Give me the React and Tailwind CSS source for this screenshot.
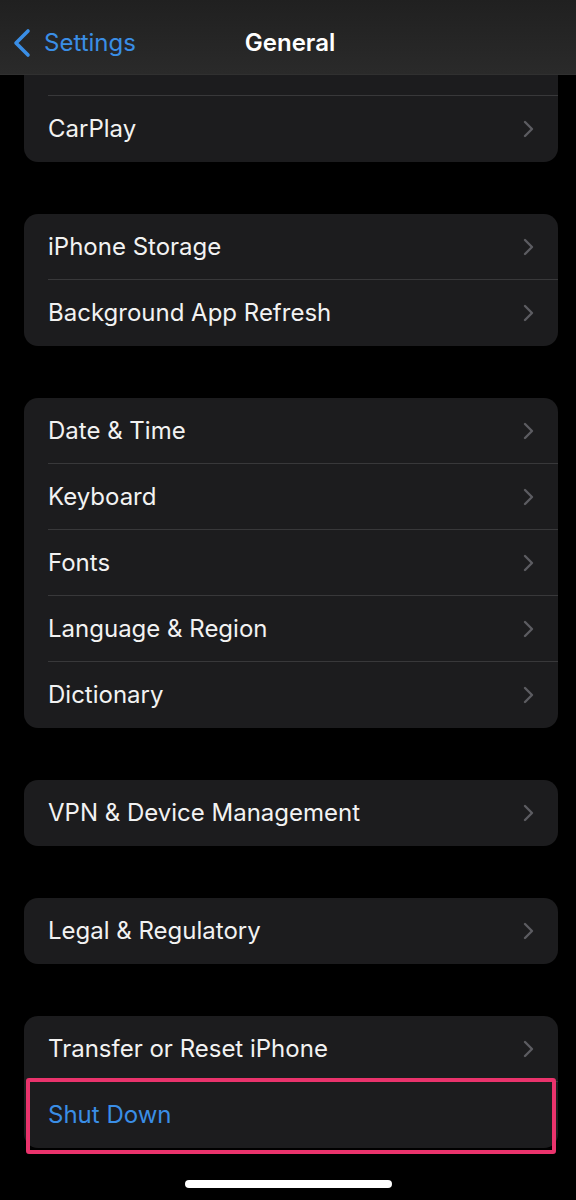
const groups = [
  ["iPhone Storage", "Background App Refresh"],
  ["Date & Time", "Keyboard", "Fonts", "Language & Region", "Dictionary"],
  ["VPN & Device Management"],
  ["Legal & Regulatory"],
];

function Chevron() {
  return (
    <svg width="12" height="20" viewBox="0 0 12 20" fill="none" className="shrink-0">
      <path d="M3 3l7 7-7 7" stroke="#5c5c61" strokeWidth="2.4" strokeLinecap="round" strokeLinejoin="round" />
    </svg>
  );
}

function Row({ label, last }) {
  return (
    <div className="flex h-[66px] items-center pl-6">
      <div className={`flex h-full flex-1 items-center justify-between pr-6 ${last ? "" : "border-b border-[#38383a]"}`}>
        <span className="text-[24px] text-[#f2f2f2]">{label}</span>
        <Chevron />
      </div>
    </div>
  );
}

export default function App() {
  return (
    <div className="min-h-[1200px] bg-black" style={{ fontFamily: "Inter, 'Noto Sans', sans-serif" }}>
      <div className="relative flex h-[75px] items-center justify-center border-b border-[#303030] bg-gradient-to-b from-[#202020] to-[#2a2a2a] pt-[11px]">
        <div className="absolute left-3 top-0 flex h-full items-center gap-3 pt-[11px]">
          <svg width="20" height="30" viewBox="0 0 20 30" fill="none">
            <path d="M16 3L4 15l12 12" stroke="#3a8ee6" strokeWidth="3.6" strokeLinecap="round" strokeLinejoin="round" />
          </svg>
          <span className="text-[24px] text-[#3a8ee6]">Settings</span>
        </div>
        <span className="ml-1 text-[24px] font-semibold text-white">General</span>
      </div>

      <div className="ml-6 mr-[18px] rounded-b-[14px] bg-[#1c1c1e]">
        <div className="ml-6 h-[21px] border-b border-[#38383a]" />
        <Row label="CarPlay" last />
      </div>

      {groups.map((g, i) => (
        <div key={i} className="ml-6 mr-[18px] mt-[52px] overflow-hidden rounded-[14px] bg-[#1c1c1e]">
          {g.map((label, j) => (
            <Row key={label} label={label} last={j === g.length - 1} />
          ))}
        </div>
      ))}

      <div className="ml-6 mr-[18px] mt-[52px] rounded-[14px] bg-[#1c1c1e]">
        <Row label="Transfer or Reset iPhone" />
        <div className="relative flex h-[66px] items-center pl-6">
          <span className="text-[24px] text-[#3a8ee6]">Shut Down</span>
          <div className="absolute -bottom-[6px] -top-[4px] left-[2px] right-[2px] rounded-[3px] border-4 border-[#ea336c]" />
        </div>
      </div>

      <div className="mx-auto mt-8 h-[8px] w-[207px] rounded-full bg-white" />
    </div>
  );
}
